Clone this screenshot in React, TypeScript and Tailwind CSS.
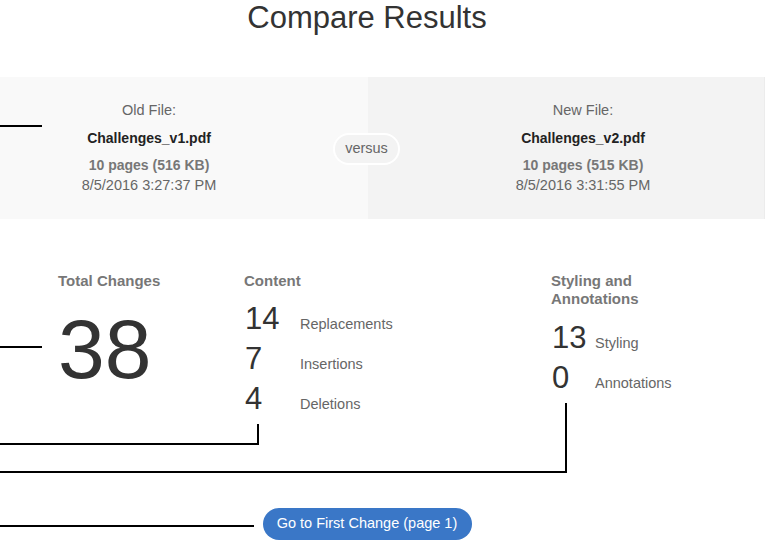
import React from 'react';

type FileInfo = {
  label: string;
  name: string;
  pages: string;
  date: string;
};

const oldFile: FileInfo = {
  label: 'Old File:',
  name: 'Challenges_v1.pdf',
  pages: '10 pages (516 KB)',
  date: '8/5/2016 3:27:37 PM',
};

const newFile: FileInfo = {
  label: 'New File:',
  name: 'Challenges_v2.pdf',
  pages: '10 pages (515 KB)',
  date: '8/5/2016 3:31:55 PM',
};

const contentRows = [
  { count: 14, label: 'Replacements' },
  { count: 7, label: 'Insertions' },
  { count: 4, label: 'Deletions' },
];

const stylingRows = [
  { count: 13, label: 'Styling' },
  { count: 0, label: 'Annotations' },
];

const FileBlock: React.FC<{ file: FileInfo }> = ({ file }) => (
  <div className="w-[298px] pt-[23px] text-center text-[14.5px] leading-5">
    <p className="text-[#666]">{file.label}</p>
    <p className="mt-2 text-[14px] font-bold text-[#222]">{file.name}</p>
    <p className="mt-[7px] text-[14px] font-bold text-[#777]">{file.pages}</p>
    <p className="text-[#666]">{file.date}</p>
  </div>
);

const CountRow: React.FC<{ count: number; label: string; numWidth: string }> = ({ count, label, numWidth }) => (
  <div className="flex items-baseline h-10 leading-10">
    <span className={`${numWidth} text-[31px] text-[#333]`}>{count}</span>
    <span className="text-[14.5px] text-[#666]">{label}</span>
  </div>
);

// callout lines drawn over the screenshot
const Callouts: React.FC = () => (
  <svg className="absolute inset-0 pointer-events-none" width="772" height="548" viewBox="0 0 772 548">
    <g stroke="#000" strokeWidth="2" fill="none">
      <line x1="0" y1="126" x2="42" y2="126" />
      <line x1="0" y1="347" x2="42" y2="347" />
      <polyline points="258,424 258,444 0,444" />
      <polyline points="566,403 566,472 0,472" />
      <line x1="0" y1="526" x2="254" y2="526" />
    </g>
  </svg>
);

export default function App() {
  return (
    <div className="relative w-[772px] h-[548px] overflow-hidden bg-white font-[family-name:'Liberation_Sans',Arial,sans-serif]">
      <h1 className="w-[734px] text-center text-[31px] leading-[36px] text-[#333]">Compare Results</h1>

      <div className="relative mt-[41px] flex h-[142px] w-[765px]">
        <div className="w-[368px] bg-[#f9f9f9]">
          <FileBlock file={oldFile} />
        </div>
        <div className="flex-1 bg-[#f3f3f3] pl-[66px] border-r border-[#ececec]">
          <FileBlock file={newFile} />
        </div>
        <div className="absolute left-[333px] top-[56px] flex h-[32px] w-[67px] items-center justify-center rounded-full border-2 border-white bg-[#f3f3f3] text-[14.5px] text-[#666]">
          versus
        </div>
      </div>

      <div className="mt-[53px] flex pl-[58px]">
        <div className="w-[186px]">
          <h2 className="text-[15px] font-bold leading-[18px] text-[#777]">Total Changes</h2>
          <p className="mt-[17px] text-[84px] leading-none text-[#333]">38</p>
        </div>
        <div className="w-[307px]">
          <h2 className="text-[15px] font-bold leading-[18px] text-[#777]">Content</h2>
          <div className="mt-[9px] pl-px">
            {contentRows.map((r) => (
              <CountRow key={r.label} count={r.count} label={r.label} numWidth="w-[55px]" />
            ))}
          </div>
        </div>
        <div>
          <h2 className="text-[15px] font-bold leading-[18px] text-[#777]">
            Styling and
            <br />
            Annotations
          </h2>
          <div className="mt-[10px] pl-px">
            {stylingRows.map((r) => (
              <CountRow key={r.label} count={r.count} label={r.label} numWidth="w-[43px]" />
            ))}
          </div>
        </div>
      </div>

      <div className="mt-[89px] flex w-[734px] justify-center">
        <button className="h-[32px] w-[209px] rounded-full bg-[#3a77c7] text-[14.5px] text-white">
          Go to First Change (page 1)
        </button>
      </div>

      <Callouts />
    </div>
  );
}
